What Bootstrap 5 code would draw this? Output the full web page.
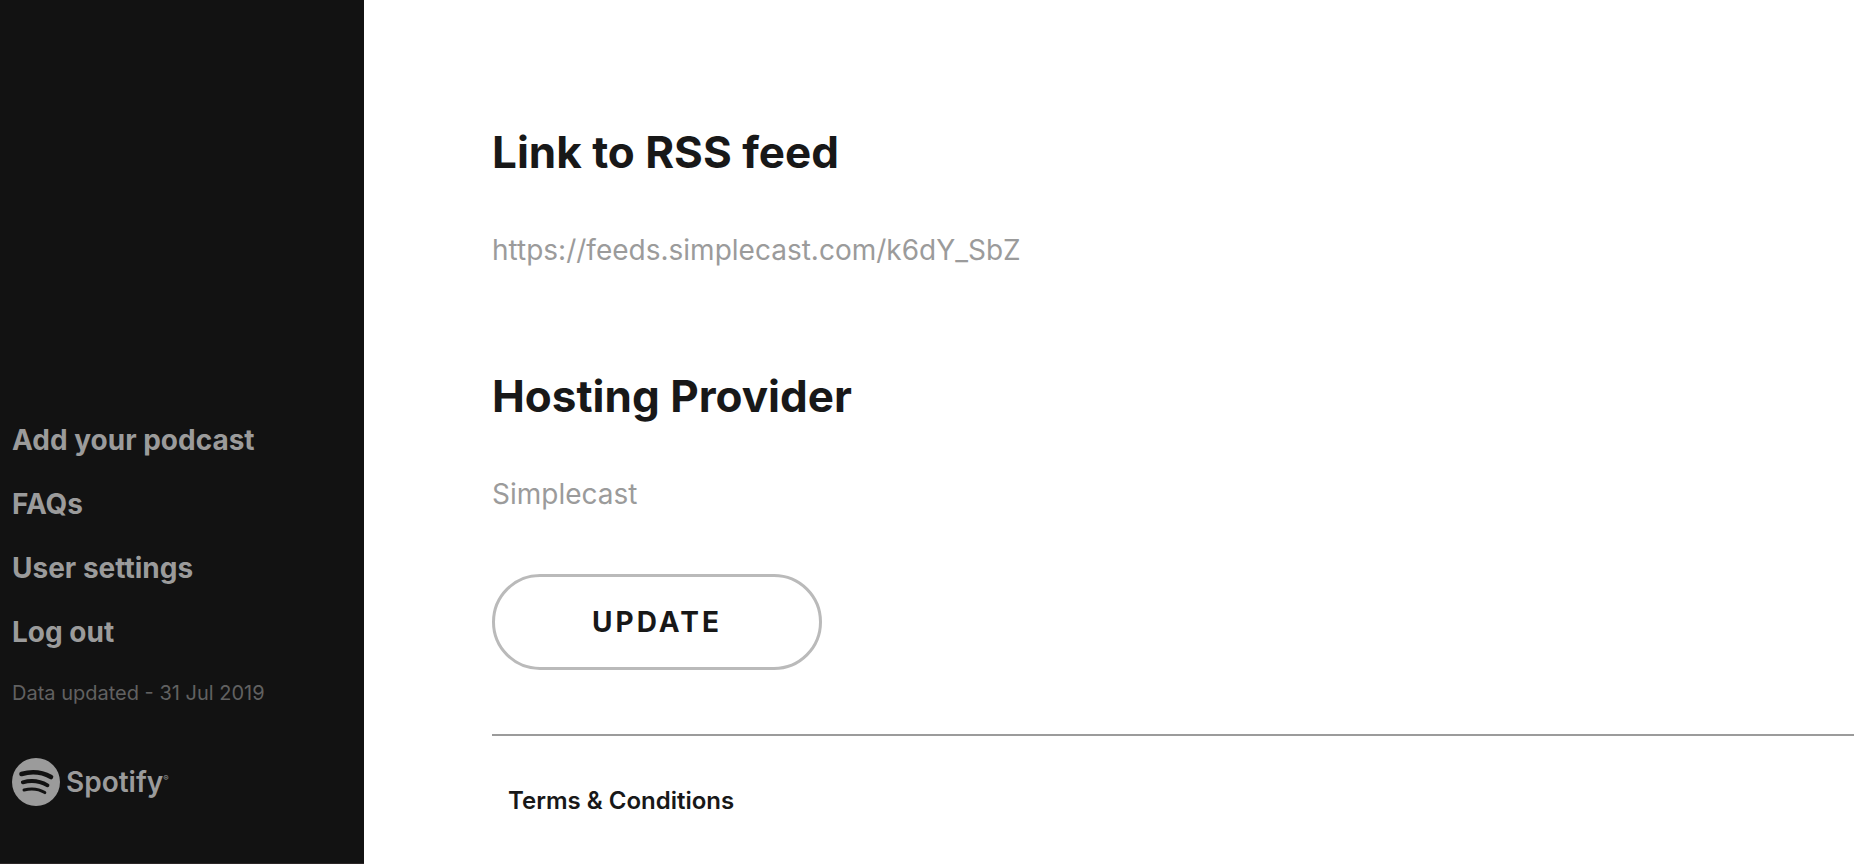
<!DOCTYPE html>
<html lang="en">
<head>
<meta charset="utf-8">
<meta name="viewport" content="width=device-width, initial-scale=1">
<title>Podcast settings</title>
<link href="https://cdn.jsdelivr.net/npm/bootstrap@5.3.0/dist/css/bootstrap.min.css" rel="stylesheet">
<style>
  body { font-family: Inter, "Liberation Sans", sans-serif; color: #181818; background: #fff; }
  .side-panel { width: 364px; padding: 0 12px 57px; background: #121212; border-bottom: 1px solid #2b2627; }
  .side-link { font-size: 28px; line-height: 64px; font-weight: 700; color: #9b9b9b; text-decoration: none; }
  .side-link:hover { color: #fff; }
  .side-note { margin: 14px 0 50px; font-size: 20px; line-height: 30px; color: #616161; }
  .logo { height: 48px; color: #9b9b9b; text-decoration: none; gap: 6px; }
  .logo-word { font-size: 28px; line-height: 48px; font-weight: 600; }
  .logo-word sup { font-size: 8px; top: -11px; font-weight: 400; }
  .main-area { min-width: 0; padding: 122px 0 40px 128px; }
  .title { font-size: 44px; line-height: 60px; font-weight: 700; margin: 0 0 48px; }
  .detail { font-size: 28px; line-height: 40px; color: #9b9b9b; margin: 0; overflow-wrap: anywhere; }
  .field + .field { margin-top: 96px; }
  .btn-update { width: 330px; height: 96px; margin-top: 60px; border: 3px solid #bababa; font-size: 28px; font-weight: 700; letter-spacing: 3px; color: #181818; }
  .btn-update:hover { border-color: #181818; color: #181818; }
  .page-foot { margin-top: 64px; padding: 48px 16px 0; border-top: 2px solid #9b9b9b; }
  .foot-link { font-size: 24px; line-height: 34px; font-weight: 600; color: #181818; text-decoration: none; }
</style>
</head>
<body>
<div class="d-flex min-vh-100">
  <aside class="side-panel d-flex flex-column justify-content-end flex-shrink-0">
    <nav class="d-flex flex-column align-items-start" aria-label="Account">
      <a class="side-link" href="#">Add your podcast</a>
      <a class="side-link" href="#">FAQs</a>
      <a class="side-link" href="#">User settings</a>
      <a class="side-link" href="#">Log out</a>
    </nav>
    <p class="side-note">Data updated - 31 Jul 2019</p>
    <a class="logo d-flex align-items-center" href="#">
      <svg width="48" height="48" viewBox="0 0 48 48" fill="none" aria-hidden="true">
        <circle cx="24" cy="24" r="24" fill="currentColor"/>
        <g stroke="#121212" stroke-linecap="round">
          <path d="M9.500 16C19 13.200 30 14 39 19" stroke-width="4.600"/>
          <path d="M10.800 24.300C19 22 28 23 35.500 27.300" stroke-width="3.800"/>
          <path d="M12 32C19 30.300 27 31 32.800 34.600" stroke-width="3"/>
        </g>
      </svg>
      <span class="logo-word">Spotify<sup>®</sup></span>
    </a>
  </aside>
  <main class="main-area flex-grow-1">
    <section class="field">
      <h2 class="title">Link to RSS feed</h2>
      <p class="detail">https://feeds.simplecast.com/k6dY_SbZ</p>
    </section>
    <section class="field">
      <h2 class="title">Hosting Provider</h2>
      <p class="detail">Simplecast</p>
    </section>
    <button type="button" class="btn btn-update rounded-pill d-block">UPDATE</button>
    <footer class="page-foot"><a class="foot-link d-inline-block" href="#">Terms &amp; Conditions</a></footer>
  </main>
</div>
<script src="https://cdn.jsdelivr.net/npm/bootstrap@5.3.0/dist/js/bootstrap.bundle.min.js"></script>
</body>
</html>
